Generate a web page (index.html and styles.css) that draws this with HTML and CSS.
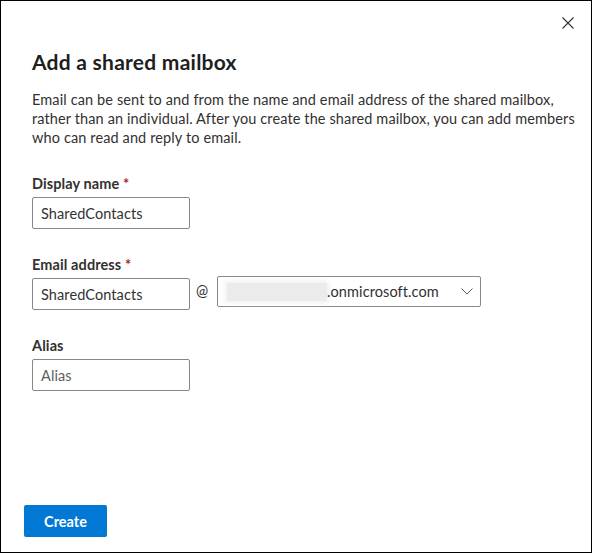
FILE: index.html
```html
<!DOCTYPE html>
<html lang="en">
<head>
    <meta charset="UTF-8">
    <meta name="viewport" content="width=device-width, initial-scale=1.0">
    <title>Add a shared mailbox</title>
    <link rel="stylesheet" href="styles.css">
</head>
<body>
    <div class="panel">
        <button type="button" class="close" aria-label="Close">
            <svg width="12" height="12" viewBox="0 0 12 12"><path d="M0.5 0.5 L11.5 11.5 M11.5 0.5 L0.5 11.5" stroke="#323130" stroke-width="1.1" fill="none"/></svg>
        </button>
        <div class="content">
            <h2>Add a shared mailbox</h2>
            <p class="intro">Email can be sent to and from the name and email address of the shared mailbox, rather than an individual. After you create the shared mailbox, you can add members who can read and reply to email.</p>

            <div class="field">
                <label for="displayName">Display name <span class="req">*</span></label>
                <input type="text" id="displayName" value="SharedContacts">
            </div>
            <div class="field">
                <label for="emailAddress">Email address <span class="req">*</span></label>
                <div class="email-row">
                    <input type="text" id="emailAddress" value="SharedContacts">
                    <span class="at">@</span>
                    <div class="domain">
                        <span class="blur"></span><span class="suffix">.onmicrosoft.com</span>
                        <svg class="chev" width="12" height="7" viewBox="0 0 12 7"><path d="M0.5 0.5 L6 6 L11.5 0.5" stroke="#605e5c" stroke-width="1" fill="none"/></svg>
                    </div>
                </div>
            </div>
            <div class="field">
                <label for="alias">Alias</label>
                <input type="text" id="alias" placeholder="Alias">
            </div>
        </div>
        <div class="footer">
            <button type="button" class="create">Create</button>
        </div>
    </div>
</body>
</html>
```

FILE: styles.css
```css
body {
    margin: 0;
    font-family: "Segoe UI", Lato, "Noto Sans", sans-serif;
    color: #323130;
    background: #fff;
}
.panel {
    width: 592px;
    height: 553px;
    box-sizing: border-box;
    border: 1px solid #000;
    position: relative;
    display: flex;
    flex-direction: column;
}
.close {
    position: absolute;
    top: 16px;
    right: 16px;
    width: 14px;
    height: 14px;
    padding: 0 1px;
    border: none;
    background: none;
    cursor: pointer;
}
.content {
    padding: 0 10px 0 31px;
}
h2 {
    margin: 47px 0 0;
    font-size: 21px;
    letter-spacing: 0.25px;
    line-height: 28px;
    font-weight: 700;
    color: #201f1e;
}
.intro {
    margin: 14px 0 0;
    font-size: 14.5px;
    letter-spacing: 0.12px;
    line-height: 19px;
}
.field {
    margin-top: 27px;
}
.field + .field {
    margin-top: 26px;
}
label {
    display: block;
    font-size: 14.5px;
    letter-spacing: 0.1px;
    line-height: 20px;
    font-weight: 700;
    margin-bottom: 3px;
}
.req {
    color: #a4262c;
}
input {
    width: 158px;
    height: 32px;
    box-sizing: border-box;
    border: 1px solid #8a8886;
    border-radius: 2px;
    padding: 0 8px;
    font-family: inherit;
    font-size: 14.5px;
    letter-spacing: 0.1px;
    color: #323130;
}
input::placeholder {
    color: #605e5c;
}
.email-row {
    display: flex;
    align-items: flex-start;
}
.at {
    width: 27px;
    padding-left: 6px;
    box-sizing: border-box;
    font-size: 14.5px;
    line-height: 26px;
}
.domain {
    margin-top: -2px;
    width: 264px;
    height: 31px;
    box-sizing: border-box;
    border: 1px solid #8a8886;
    border-radius: 2px;
    display: flex;
    align-items: center;
    padding: 0 7px 0 9px;
    font-size: 14.5px;
    letter-spacing: 0.1px;
}
.blur {
    width: 100px;
    height: 18px;
    background: #ebebeb;
    box-shadow: 0 0 5px 2px #f0f0f0;
}
.suffix {
    flex: 1;
}
.footer {
    margin-top: auto;
    padding: 0 23px 15px;
}
.create {
    width: 83px;
    height: 32px;
    border: none;
    border-radius: 2px;
    background: #0078d4;
    color: #fff;
    font-family: inherit;
    font-size: 14.5px;
    font-weight: 700;
    cursor: pointer;
}
```
